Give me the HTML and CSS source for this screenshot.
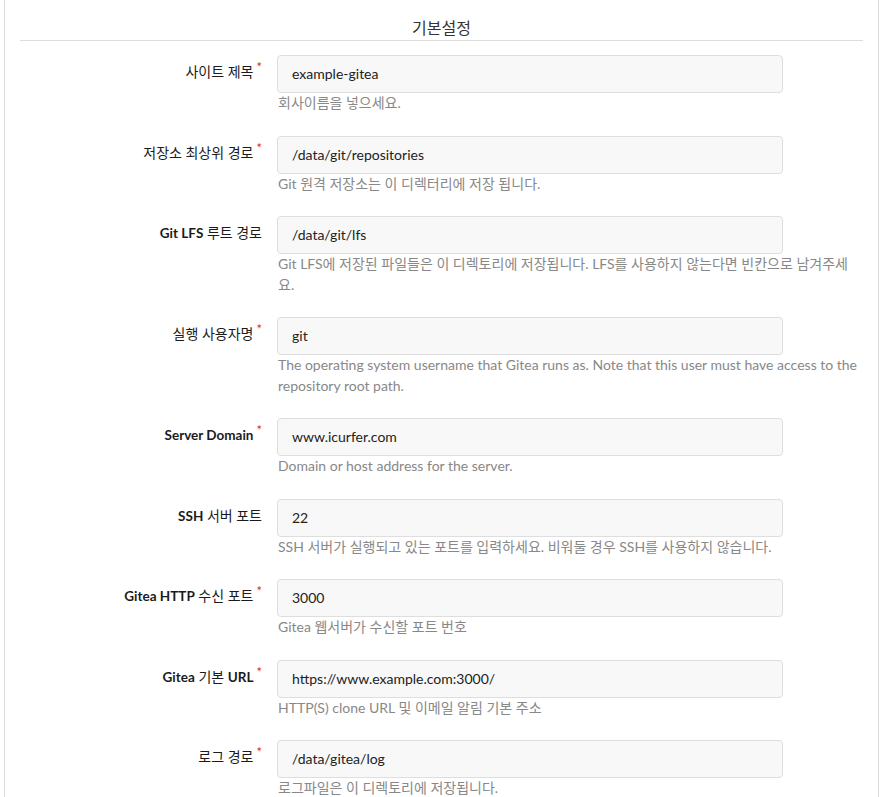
FILE: index.html
```html
<!DOCTYPE html>
<html lang="ko">
<head>
<meta charset="utf-8">
<title>기본설정</title>
<link rel="stylesheet" href="styles.css">
</head>
<body>
<div class="panel">
  <h4 class="section-title">기본설정</h4>
  <div class="form">
    <div class="field required">
      <label class="field-label">사이트 제목</label>
      <div class="field-body">
        <div class="input">example-gitea</div>
        <div class="help">회사이름을 넣으세요.</div>
      </div>
    </div>
    <div class="field required">
      <label class="field-label">저장소 최상위 경로</label>
      <div class="field-body">
        <div class="input">/data/git/repositories</div>
        <div class="help">Git 원격 저장소는 이 디렉터리에 저장 됩니다.</div>
      </div>
    </div>
    <div class="field">
      <label class="field-label"><span class="en">Git LFS</span> 루트 경로</label>
      <div class="field-body">
        <div class="input">/data/git/lfs</div>
        <div class="help">Git LFS에 저장된 파일들은 이 디렉토리에 저장됩니다. LFS를 사용하지 않는다면 빈칸으로 남겨주세요.</div>
      </div>
    </div>
    <div class="field required">
      <label class="field-label">실행 사용자명</label>
      <div class="field-body">
        <div class="input">git</div>
        <div class="help">The operating system username that Gitea runs as. Note that this user must have access to the repository root path.</div>
      </div>
    </div>
    <div class="field required">
      <label class="field-label"><span class="en">Server Domain</span></label>
      <div class="field-body">
        <div class="input">www.icurfer.com</div>
        <div class="help">Domain or host address for the server.</div>
      </div>
    </div>
    <div class="field">
      <label class="field-label"><span class="en">SSH</span> 서버 포트</label>
      <div class="field-body">
        <div class="input">22</div>
        <div class="help">SSH 서버가 실행되고 있는 포트를 입력하세요. 비워둘 경우 SSH를 사용하지 않습니다.</div>
      </div>
    </div>
    <div class="field required">
      <label class="field-label"><span class="en">Gitea HTTP</span> 수신 포트</label>
      <div class="field-body">
        <div class="input">3000</div>
        <div class="help">Gitea 웹서버가 수신할 포트 번호</div>
      </div>
    </div>
    <div class="field required">
      <label class="field-label"><span class="en">Gitea</span> 기본 <span class="en">URL</span></label>
      <div class="field-body">
        <div class="input">https://www.example.com:3000/</div>
        <div class="help">HTTP(S) clone URL 및 이메일 알림 기본 주소</div>
      </div>
    </div>
    <div class="field required">
      <label class="field-label">로그 경로</label>
      <div class="field-body">
        <div class="input">/data/gitea/log</div>
        <div class="help">로그파일은 이 디렉토리에 저장됩니다.</div>
      </div>
    </div>
  </div>
</div>
</body>
</html>
```
FILE: styles.css
```css
html, body {
  margin: 0;
  padding: 0;
  background: #fff;
}
body {
  font-family: "Lato", "Noto Sans CJK KR", sans-serif;
  font-size: 14px;
  color: #222;
}
.panel {
  margin-left: 4px;
  width: 875px;
  min-height: 797px;
  box-sizing: border-box;
  border-left: 1px solid #dcdcdc;
  border-right: 1px solid #dcdcdc;
  padding: 0 15px;
}
.section-title {
  margin: 0;
  padding: 19px 0 3px;
  text-align: center;
  font-size: 16px;
  font-weight: 400;
  line-height: 18px;
  color: #333;
  border-bottom: 1px solid #dddddd;
}
.form {
  padding-top: 14px;
}
.field {
  display: flex;
  align-items: flex-start;
  margin-bottom: 22px;
}
.field-label {
  width: 242px;
  flex: none;
  text-align: right;
  font-size: 14px;
  font-weight: 400;
  line-height: 18px;
  padding-top: 8px;
  color: #1b1b1b;
}
.en {
  font-weight: 700;
  font-size: 13.5px;
}
.required .field-label::after {
  content: "*";
  color: #db2828;
  font-weight: 400;
  font-size: 13px;
  position: relative;
  top: -5px;
  margin-left: 3px;
}
.field-body {
  margin-left: 15px;
  width: 586px;
}
.input {
  width: 506px;
  height: 38px;
  box-sizing: border-box;
  border: 1px solid #dedede;
  border-radius: 4px;
  background: #f8f8f8;
  padding: 0 14px;
  line-height: 36px;
  font-size: 14px;
  color: #222;
}
.help {
  margin-top: 0;
  font-size: 14px;
  line-height: 20.5px;
  color: #888;
  padding-left: 1px;
}
```
